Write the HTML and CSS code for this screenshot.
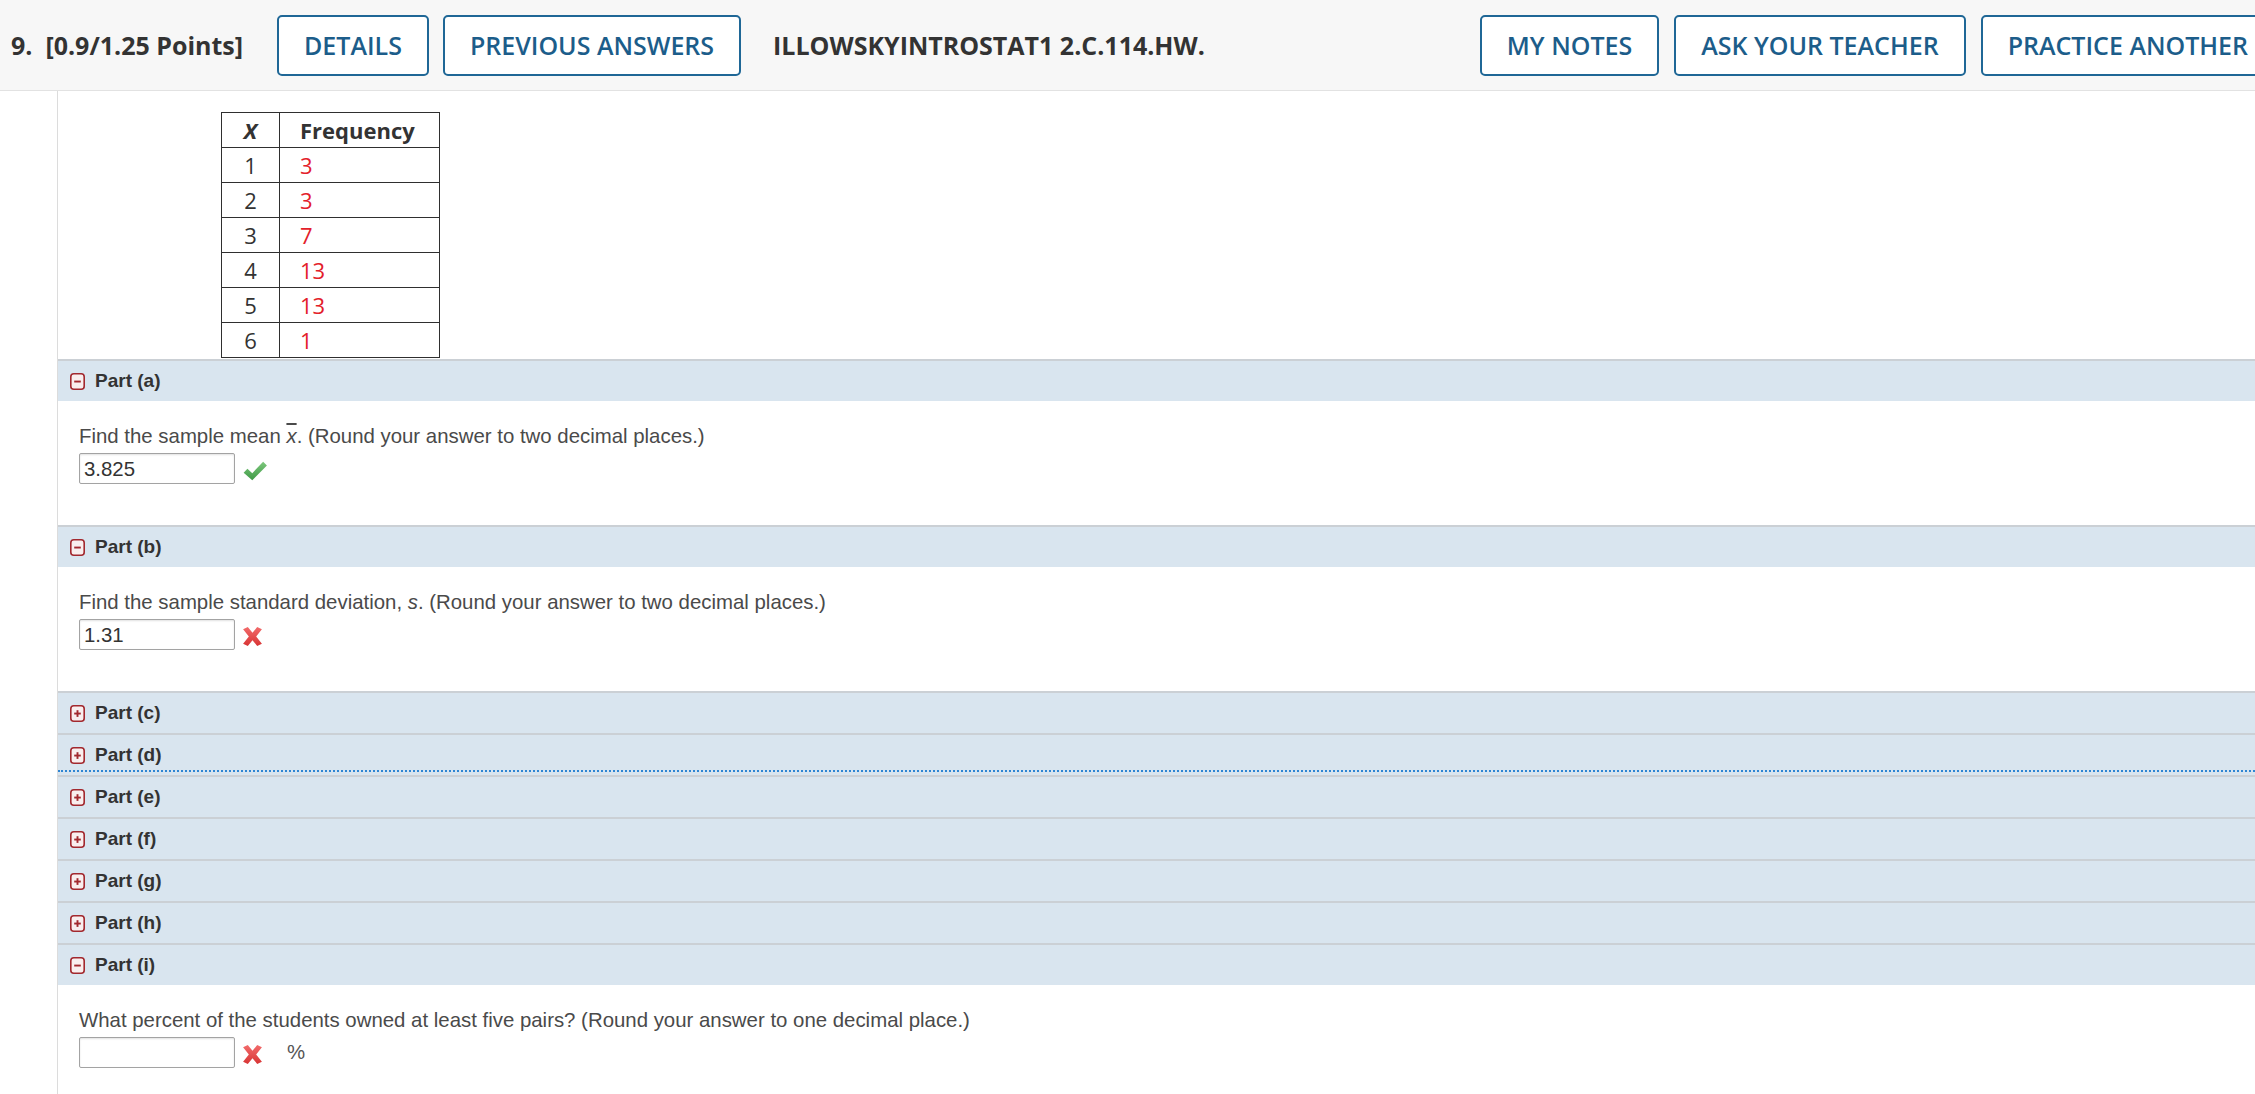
FILE: index.html
```html
<!DOCTYPE html>
<html lang="en">
<head>
<meta charset="utf-8">
<title>Question 9</title>
<link rel="stylesheet" href="styles.css">
</head>
<body>
<div class="topbar">
  <div class="qnum">9.&nbsp; [0.9/1.25 Points]</div>
  <div class="btn-group left">
    <button class="btn">DETAILS</button>
    <button class="btn">PREVIOUS ANSWERS</button>
  </div>
  <div class="qtitle">ILLOWSKYINTROSTAT1 2.C.114.HW.</div>
  <div class="btn-group right">
    <button class="btn">MY NOTES</button>
    <button class="btn">ASK YOUR TEACHER</button>
    <button class="btn">PRACTICE ANOTHER</button>
  </div>
</div>

<div class="main">
  <div class="gutter"></div>
  <div class="content">
    <div class="table-wrap">
      <table class="freq">
        <thead>
          <tr><th class="xcol"><i>X</i></th><th class="fcol">Frequency</th></tr>
        </thead>
        <tbody>
          <tr><td class="xcol">1</td><td class="fcol red">3</td></tr>
          <tr><td class="xcol">2</td><td class="fcol red">3</td></tr>
          <tr><td class="xcol">3</td><td class="fcol red">7</td></tr>
          <tr><td class="xcol">4</td><td class="fcol red">13</td></tr>
          <tr><td class="xcol">5</td><td class="fcol red">13</td></tr>
          <tr><td class="xcol">6</td><td class="fcol red">1</td></tr>
        </tbody>
      </table>
    </div>

    <div class="part-head">
      <svg class="toggle" viewBox="0 0 15 17" width="15" height="17"><rect x="0.8" y="0.8" width="13.4" height="15.4" rx="3" fill="#f9eeee" stroke="#a2282e" stroke-width="1.6"/><rect x="4.2" y="7.6" width="6.6" height="1.9" fill="#a2282e"/></svg>
      <span>Part (a)</span>
    </div>
    <div class="part-body">
      <p class="q">Find the sample mean <span class="xbar">x</span>. (Round your answer to two decimal places.)</p>
      <div class="answer">
        <div class="inp">3.825</div>
        <svg class="mark check" viewBox="0 0 24 20" width="26" height="22"><defs><linearGradient id="g" x1="0" y1="0" x2="0" y2="1"><stop offset="0" stop-color="#7cc77c"/><stop offset="1" stop-color="#3f9a46"/></linearGradient></defs><path d="M1.5 11.5 L5 8 L9.5 12 L19.5 1.5 L23 5 L9.5 18.5 Z" fill="url(#g)"/></svg>
      </div>
    </div>

    <div class="part-head">
      <svg class="toggle" viewBox="0 0 15 17" width="15" height="17"><rect x="0.8" y="0.8" width="13.4" height="15.4" rx="3" fill="#f9eeee" stroke="#a2282e" stroke-width="1.6"/><rect x="4.2" y="7.6" width="6.6" height="1.9" fill="#a2282e"/></svg>
      <span>Part (b)</span>
    </div>
    <div class="part-body">
      <p class="q">Find the sample standard deviation, <i>s</i>. (Round your answer to two decimal places.)</p>
      <div class="answer">
        <div class="inp">1.31</div>
        <svg class="mark cross" viewBox="0 0 22 20" width="23" height="21"><defs><linearGradient id="r" x1="0" y1="0" x2="0" y2="1"><stop offset="0" stop-color="#f26b6b"/><stop offset="1" stop-color="#d83434"/></linearGradient></defs><path d="M2 3 L6.5 1 L11 6.5 L15.5 1 L20 3 L14.5 10 L20 17 L15.5 19 L11 13.5 L6.5 19 L2 17 L7.5 10 Z" fill="url(#r)"/></svg>
      </div>
    </div>

    <div class="part-head">
      <svg class="toggle" viewBox="0 0 15 17" width="15" height="17"><rect x="0.8" y="0.8" width="13.4" height="15.4" rx="3" fill="#f9eeee" stroke="#a2282e" stroke-width="1.6"/><rect x="4.2" y="7.6" width="6.6" height="1.9" fill="#a2282e"/><rect x="6.55" y="5.2" width="1.9" height="6.7" fill="#a2282e"/></svg>
      <span>Part (c)</span>
    </div>
    <div class="part-head focused">
      <svg class="toggle" viewBox="0 0 15 17" width="15" height="17"><rect x="0.8" y="0.8" width="13.4" height="15.4" rx="3" fill="#f9eeee" stroke="#a2282e" stroke-width="1.6"/><rect x="4.2" y="7.6" width="6.6" height="1.9" fill="#a2282e"/><rect x="6.55" y="5.2" width="1.9" height="6.7" fill="#a2282e"/></svg>
      <span>Part (d)</span>
    </div>
    <div class="part-head">
      <svg class="toggle" viewBox="0 0 15 17" width="15" height="17"><rect x="0.8" y="0.8" width="13.4" height="15.4" rx="3" fill="#f9eeee" stroke="#a2282e" stroke-width="1.6"/><rect x="4.2" y="7.6" width="6.6" height="1.9" fill="#a2282e"/><rect x="6.55" y="5.2" width="1.9" height="6.7" fill="#a2282e"/></svg>
      <span>Part (e)</span>
    </div>
    <div class="part-head">
      <svg class="toggle" viewBox="0 0 15 17" width="15" height="17"><rect x="0.8" y="0.8" width="13.4" height="15.4" rx="3" fill="#f9eeee" stroke="#a2282e" stroke-width="1.6"/><rect x="4.2" y="7.6" width="6.6" height="1.9" fill="#a2282e"/><rect x="6.55" y="5.2" width="1.9" height="6.7" fill="#a2282e"/></svg>
      <span>Part (f)</span>
    </div>
    <div class="part-head">
      <svg class="toggle" viewBox="0 0 15 17" width="15" height="17"><rect x="0.8" y="0.8" width="13.4" height="15.4" rx="3" fill="#f9eeee" stroke="#a2282e" stroke-width="1.6"/><rect x="4.2" y="7.6" width="6.6" height="1.9" fill="#a2282e"/><rect x="6.55" y="5.2" width="1.9" height="6.7" fill="#a2282e"/></svg>
      <span>Part (g)</span>
    </div>
    <div class="part-head">
      <svg class="toggle" viewBox="0 0 15 17" width="15" height="17"><rect x="0.8" y="0.8" width="13.4" height="15.4" rx="3" fill="#f9eeee" stroke="#a2282e" stroke-width="1.6"/><rect x="4.2" y="7.6" width="6.6" height="1.9" fill="#a2282e"/><rect x="6.55" y="5.2" width="1.9" height="6.7" fill="#a2282e"/></svg>
      <span>Part (h)</span>
    </div>
    <div class="part-head">
      <svg class="toggle" viewBox="0 0 15 17" width="15" height="17"><rect x="0.8" y="0.8" width="13.4" height="15.4" rx="3" fill="#f9eeee" stroke="#a2282e" stroke-width="1.6"/><rect x="4.2" y="7.6" width="6.6" height="1.9" fill="#a2282e"/></svg>
      <span>Part (i)</span>
    </div>
    <div class="part-body last">
      <p class="q">What percent of the students owned at least five pairs? (Round your answer to one decimal place.)</p>
      <div class="answer">
        <div class="inp"></div>
        <svg class="mark cross" viewBox="0 0 22 20" width="23" height="21"><path d="M2 3 L6.5 1 L11 6.5 L15.5 1 L20 3 L14.5 10 L20 17 L15.5 19 L11 13.5 L6.5 19 L2 17 L7.5 10 Z" fill="url(#r)"/></svg>
        <span class="unit">%</span>
      </div>
    </div>
  </div>
</div>
</body>
</html>
```

FILE: styles.css
```css
html, body {
  margin: 0;
  padding: 0;
  overflow: hidden;
  background: #ffffff;
}

.topbar {
  display: flex;
  align-items: center;
  box-sizing: border-box;
  width: 2278px;
  height: 91px;
  padding: 0 3px 0 11px;
  background: #f7f7f7;
  border-bottom: 1px solid #e2e2e2;
  font-family: "Open Sans", "Liberation Sans", sans-serif;
}

.qnum {
  font-size: 25px;
  font-weight: 700;
  color: #333333;
  white-space: nowrap;
}

.btn-group {
  display: flex;
  gap: 14px;
}

.btn-group.left {
  margin-left: 34px;
}

.btn-group.right {
  margin-left: auto;
  gap: 15px;
}

.btn {
  height: 61px;
  padding: 0 25px;
  background: #ffffff;
  border: 2px solid #1f6796;
  border-radius: 5px;
  color: #1c5d8a;
  font-family: "Open Sans", "Liberation Sans", sans-serif;
  font-size: 25px;
  font-weight: 600;
  white-space: nowrap;
}

.qtitle {
  margin-left: 32px;
  font-size: 25px;
  font-weight: 700;
  color: #333333;
  white-space: nowrap;
}

.main {
  display: flex;
  min-height: 1003px;
}

.gutter {
  width: 57px;
  flex: none;
  border-right: 1px solid #dcdcdc;
}

.content {
  flex: 1;
}

.table-wrap {
  padding: 21px 0 1px 163px;
}

.freq {
  border-collapse: collapse;
  font-family: "Open Sans", "Liberation Sans", sans-serif;
  font-size: 22px;
  color: #333333;
}

.freq th,
.freq td {
  border: 1.5px solid #2f2f2f;
  height: 34px;
  padding: 0;
  line-height: 1;
}

.freq th {
  font-weight: 700;
}

.freq .xcol {
  width: 57px;
  text-align: center;
}

.freq .fcol {
  width: 139px;
  text-align: left;
  padding-left: 20px;
}

.freq .red {
  color: #e3202a;
}

.part-head {
  display: flex;
  align-items: center;
  gap: 10px;
  box-sizing: border-box;
  height: 42px;
  padding-left: 12px;
  background: #d9e5ef;
  border-top: 2px solid #cbd0d5;
  font-family: "Liberation Sans", Arial, sans-serif;
  font-size: 19px;
  font-weight: 700;
  color: #333333;
}

.part-head.focused {
  position: relative;
}

.part-head.focused::after {
  content: "";
  position: absolute;
  left: 0;
  right: 0;
  bottom: 3px;
  border-top: 2px dotted #2f86d3;
}

.toggle {
  flex: none;
  display: block;
}

.part-body {
  box-sizing: border-box;
  height: 124px;
  padding: 24px 21px 0;
  font-family: "Liberation Sans", Arial, sans-serif;
  font-size: 20.4px;
  color: #4a4a4a;
}

.part-body.last {
  height: auto;
}

.q {
  margin: 0 0 5px;
  line-height: 23px;
}

.xbar {
  font-style: italic;
  text-decoration: overline;
}

.answer {
  display: flex;
  align-items: center;
}

.inp {
  box-sizing: border-box;
  width: 156px;
  height: 31px;
  padding: 2px 4px 0;
  border: 1px solid #a3a3a3;
  border-radius: 2px;
  box-shadow: inset 0 1px 2px rgba(0, 0, 0, 0.12);
  color: #333333;
  line-height: 26px;
}

.mark {
  display: block;
  margin-left: 6px;
  margin-top: 4px;
}

.mark.check {
  margin-left: 7px;
}

.unit {
  margin-left: 23px;
  color: #555555;
}
```
